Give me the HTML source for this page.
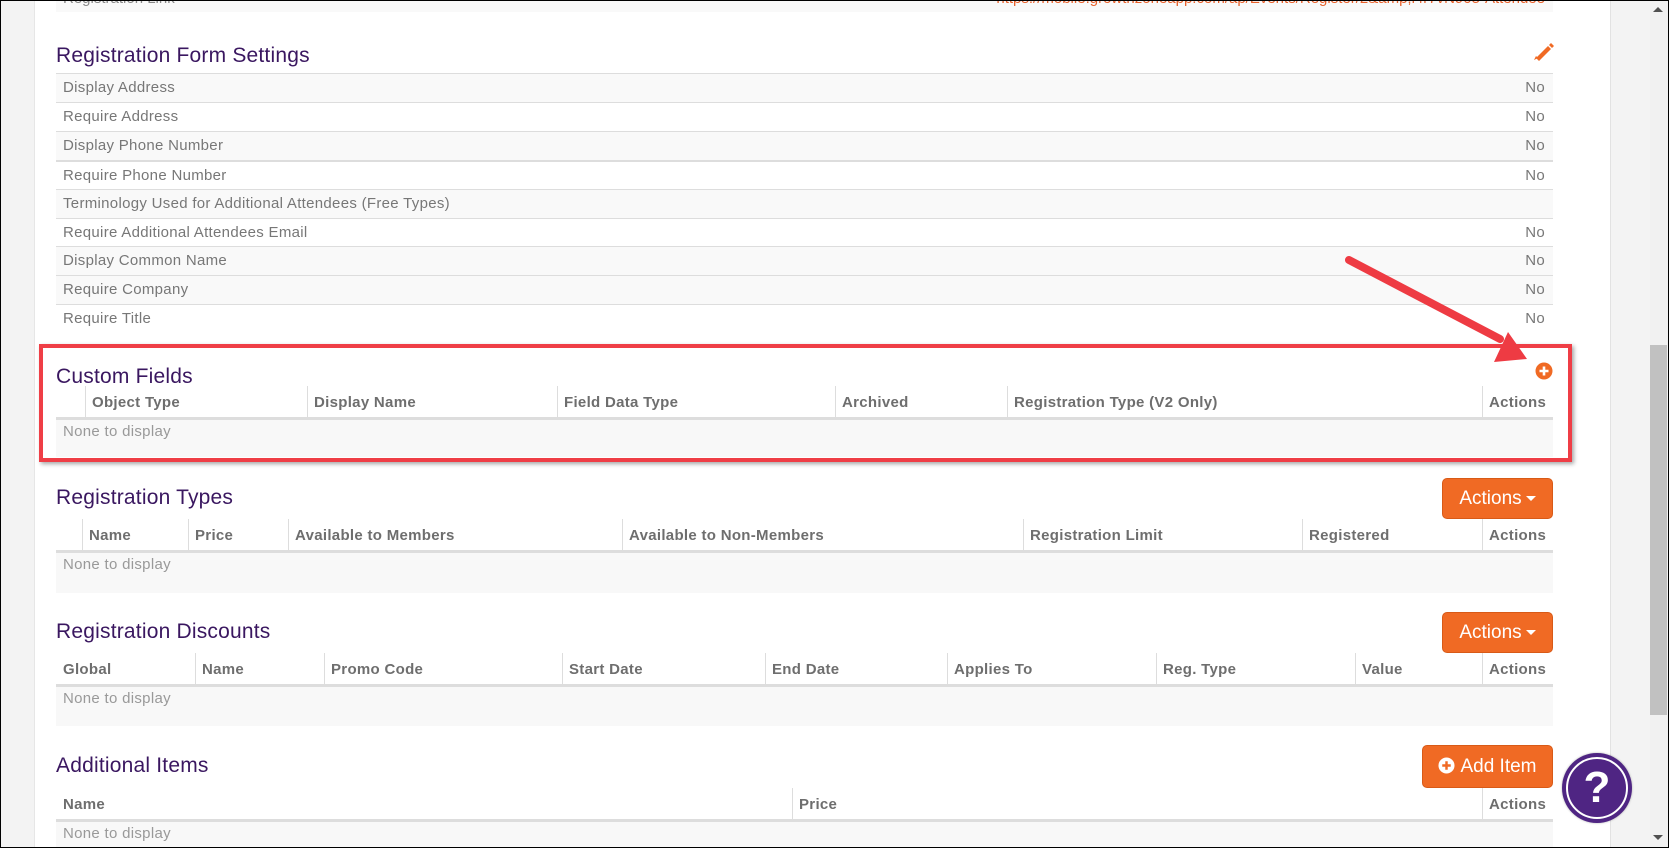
<!DOCTYPE html>
<html><head><meta charset="utf-8"><style>
*{margin:0;padding:0;box-sizing:border-box}
body{width:1669px;height:848px;overflow:hidden;position:relative;background:#fff;font-family:"Liberation Sans",sans-serif;color:#777}
.abs{position:absolute}
.h{position:absolute;left:56px;font-size:21px;color:#3a1760;line-height:24px;letter-spacing:.2px}
.row{position:absolute;left:56px;width:1497px;height:29px;border-top:1px solid #ddd;font-size:15px;line-height:28px;padding-left:7px;letter-spacing:.3px}
.row.s{background:#f9f9f9}
.row span{position:absolute;right:8px;top:0}
.hd{position:absolute;left:56px;width:1497px;height:34px;border-bottom:3px solid #ddd}
.hd div{position:absolute;top:0;height:31px;border-left:1px solid #ddd;font-weight:bold;font-size:15px;line-height:34px;padding-left:6px;color:#6e6e6e;letter-spacing:.3px}
.empty{position:absolute;left:56px;width:1497px;background:#f8f8f8;font-size:15px;padding-left:7px;color:#999;letter-spacing:.3px}
.btn{position:absolute;background:#f06a24;border:1px solid #d85a17;border-radius:5px;color:#fff;font-size:19px;text-align:center}
.car{display:inline-block;width:0;height:0;border-left:5px solid transparent;border-right:5px solid transparent;border-top:5px solid #fff;vertical-align:3px;margin-left:4px}
</style></head><body>
<div class="abs" style="left:0;top:0;width:35px;height:848px;background:#f3f3f3;border-right:1px solid #e6e6e6"></div>
<div class="abs" style="left:1610px;top:0;width:40px;height:848px;background:#f3f3f3;border-left:1px solid #e2e2e2"></div>
<div class="abs" style="left:1650px;top:0;width:19px;height:848px;background:#f1f1f1"></div>
<div class="abs" style="left:1650px;top:345px;width:17px;height:370px;background:#c1c1c1"></div>
<div class="abs" style="left:1653px;top:7px;width:0;height:0;border-left:5px solid transparent;border-right:5px solid transparent;border-bottom:5px solid #505050"></div>
<div class="abs" style="left:1653px;top:835px;width:0;height:0;border-left:5px solid transparent;border-right:5px solid transparent;border-top:5px solid #505050"></div>

<div class="abs" style="left:56px;top:0;width:1497px;height:12px;background:#f9f9f9;overflow:hidden">
<div class="abs" style="right:8px;top:-10px;font-size:15px;color:#e8602a;white-space:nowrap">https://mobile.growthzoneapp.com/ap/Events/Register/2&amp;amp;l4r7vN905-Attendee</div>
<div class="abs" style="left:7px;top:-10px;font-size:15px;color:#888">Registration Link</div>
</div>

<div class="h" style="top:44px">Registration Form Settings</div>
<svg class="abs" style="left:1533px;top:41px" width="22" height="20" viewBox="0 0 22 20"><path d="M3 17 L15 5 L18 8 L6 20Z" fill="#f06a24"/><path d="M16 4 L18 2 L21 5 L19 7Z" fill="#f06a24"/><path d="M1 19 L3 15 L5 17 Z" fill="#f06a24"/></svg>

<div class="row s" style="top:73px">Display Address<span>No</span></div>
<div class="row" style="top:102px">Require Address<span>No</span></div>
<div class="row s" style="top:131px">Display Phone Number<span>No</span></div>
<div class="row" style="top:160px;border-top:2px solid #ddd">Require Phone Number<span>No</span></div>
<div class="row s" style="top:189px">Terminology Used for Additional Attendees (Free Types)</div>
<div class="row" style="top:218px">Require Additional Attendees Email<span>No</span></div>
<div class="row s" style="top:246px">Display Common Name<span>No</span></div>
<div class="row s" style="top:275px">Require Company<span>No</span></div>
<div class="row" style="top:304px">Require Title<span>No</span></div>

<div class="h" style="top:365px">Custom Fields</div>
<svg class="abs" style="left:1535px;top:362px" width="18" height="18" viewBox="0 0 18 18"><circle cx="9" cy="9" r="8.5" fill="#f06a24"/><path d="M9 4.5v9M4.5 9h9" stroke="#fff" stroke-width="2.6"/></svg>
<div class="hd" style="top:386px">
<div style="left:29px">Object Type</div>
<div style="left:251px">Display Name</div>
<div style="left:501px">Field Data Type</div>
<div style="left:779px">Archived</div>
<div style="left:951px">Registration Type (V2 Only)</div>
<div style="left:1426px">Actions</div>
</div>
<div class="empty" style="top:420px;height:37px;line-height:24px">None to display</div>
<div class="abs" style="left:39px;top:344px;width:1533px;height:118px;border:4px solid #ef3e46;box-shadow:2px 2px 4px rgba(0,0,0,.35)"></div>

<div class="h" style="top:486px">Registration Types</div>
<div class="btn" style="left:1442px;top:478px;width:111px;height:41px;line-height:39px">Actions<span class="car"></span></div>
<div class="hd" style="top:519px">
<div style="left:26px">Name</div>
<div style="left:132px">Price</div>
<div style="left:232px">Available to Members</div>
<div style="left:566px">Available to Non-Members</div>
<div style="left:967px">Registration Limit</div>
<div style="left:1246px">Registered</div>
<div style="left:1426px">Actions</div>
</div>
<div class="empty" style="top:553px;height:40px;line-height:24px">None to display</div>

<div class="h" style="top:620px">Registration Discounts</div>
<div class="btn" style="left:1442px;top:612px;width:111px;height:41px;line-height:39px">Actions<span class="car"></span></div>
<div class="hd" style="top:653px">
<div style="left:0;border-left:none;padding-left:7px">Global</div>
<div style="left:139px">Name</div>
<div style="left:268px">Promo Code</div>
<div style="left:506px">Start Date</div>
<div style="left:709px">End Date</div>
<div style="left:891px">Applies To</div>
<div style="left:1100px">Reg. Type</div>
<div style="left:1299px">Value</div>
<div style="left:1426px">Actions</div>
</div>
<div class="empty" style="top:687px;height:39px;line-height:24px">None to display</div>

<div class="h" style="top:754px">Additional Items</div>
<div class="btn" style="left:1422px;top:745px;width:131px;height:43px;line-height:41px"><svg width="17" height="17" viewBox="0 0 18 18" style="vertical-align:-2px;margin-right:5px"><circle cx="9" cy="9" r="8.5" fill="#fff"/><path d="M9 4.5v9M4.5 9h9" stroke="#f06a24" stroke-width="2.6"/></svg>Add Item</div>
<div class="hd" style="top:788px">
<div style="left:0;border-left:none;padding-left:7px">Name</div>
<div style="left:736px">Price</div>
<div style="left:1426px">Actions</div>
</div>
<div class="empty" style="top:822px;height:26px;line-height:24px">None to display</div>

<svg class="abs" style="left:0;top:0" width="1669" height="848">
<line x1="1349" y1="260" x2="1500" y2="339" stroke="#ee3b43" stroke-width="8" stroke-linecap="round"/>
<polygon points="1527,359 1494,362 1508,332" fill="#ee3b43"/>
</svg>

<div class="abs" style="left:1562px;top:753px;width:70px;height:70px;border-radius:50%;background:#4f2583;box-shadow:0 0 2px rgba(0,0,0,.3)"></div>
<div class="abs" style="left:1566px;top:757px;width:62px;height:62px;border-radius:50%;border:2px solid #fff"></div>
<div class="abs" style="left:1562px;top:753px;width:70px;height:70px;line-height:70px;text-align:center;color:#fff;font-size:44px;font-weight:bold">?</div>

<div class="abs" style="left:0;top:0;width:1669px;height:848px;border:1px solid #000;pointer-events:none"></div>
</body></html>
